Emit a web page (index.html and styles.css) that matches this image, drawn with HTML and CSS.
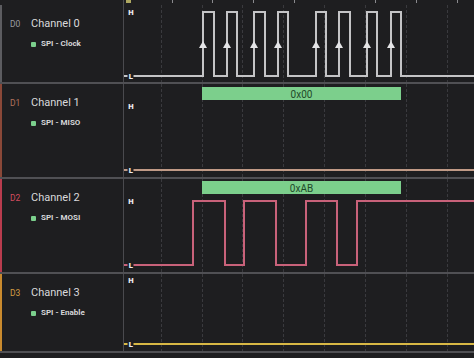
FILE: index.html
```html
<!DOCTYPE html>
<html lang="en">
<head>
    <meta charset="UTF-8">
    <meta name="viewport" content="width=device-width, initial-scale=1.0">
    <title>Logic Analyzer</title>
    <link rel="stylesheet" href="styles.css">
</head>
<body>
    <div class="ruler">
        <div class="ruler-gutter"></div>
        <svg class="ruler-ticks" width="350" height="5">
            <rect x="2" y="0" width="5" height="3" fill="#aea860"/>
            <g stroke="#8a8a8e" stroke-width="1">
                <line x1="48.5" y1="0" x2="48.5" y2="3"/>
                <line x1="88.5" y1="0" x2="88.5" y2="3"/>
                <line x1="129.5" y1="0" x2="129.5" y2="3"/>
                <line x1="170.5" y1="0" x2="170.5" y2="3"/>
                <line x1="251.5" y1="0" x2="251.5" y2="3"/>
                <line x1="292.5" y1="0" x2="292.5" y2="3"/>
                <line x1="333.5" y1="0" x2="333.5" y2="3"/>
            </g>
        </svg>
    </div>

    <!-- D0 -->
    <div class="channel ch0">
        <div class="info">
            <div class="title"><span class="dnum">D0</span><span class="name">Channel 0</span></div>
            <div class="analyzer"><span class="swatch"></span>SPI - Clock</div>
        </div>
        <svg class="wave" width="350" height="77">
            <g class="grid">
                <line x1="37.5" y1="0" x2="37.5" y2="77"/><line x1="78.5" y1="0" x2="78.5" y2="77"/>
                <line x1="118.5" y1="0" x2="118.5" y2="77"/><line x1="159.5" y1="0" x2="159.5" y2="77"/>
                <line x1="200.5" y1="0" x2="200.5" y2="77"/><line x1="241.5" y1="0" x2="241.5" y2="77"/>
                <line x1="282.5" y1="0" x2="282.5" y2="77"/><line x1="323.5" y1="0" x2="323.5" y2="77"/>
            </g>
            <path class="trace" stroke="#c4c4c6" d="M0 71 H79 V7 H90 V71 H103 V7 H113 V71 H130 V7 H141 V71 H154 V7 H164 V71 H192 V7 H202 V71 H215 V7 H226 V71 H243 V7 H253 V71 H267 V7 H277 V71 H350"/>
            <g fill="#e4e4e6">
                <path d="M79 36 L83 43 L75 43 Z"/><path d="M103 36 L107 43 L99 43 Z"/>
                <path d="M130 36 L134 43 L126 43 Z"/><path d="M154 36 L158 43 L150 43 Z"/>
                <path d="M192 36 L196 43 L188 43 Z"/><path d="M215 36 L219 43 L211 43 Z"/>
                <path d="M243 36 L247 43 L239 43 Z"/><path d="M267 36 L271 43 L263 43 Z"/>
            </g>
            <text class="lvl" x="4" y="9.5">H</text>
            <rect class="lvl-bg" x="3.5" y="67" width="6" height="8"/>
            <text class="lvl" x="4.5" y="73.5">L</text>
        </svg>
    </div>

    <!-- D1 -->
    <div class="channel ch1 decoded">
        <div class="info">
            <div class="title"><span class="dnum">D1</span><span class="name">Channel 1</span></div>
            <div class="analyzer"><span class="swatch"></span>SPI - MISO</div>
        </div>
        <svg class="wave" width="350" height="93">
            <g class="grid">
                <line x1="37.5" y1="0" x2="37.5" y2="93"/><line x1="78.5" y1="0" x2="78.5" y2="93"/>
                <line x1="118.5" y1="0" x2="118.5" y2="93"/><line x1="159.5" y1="0" x2="159.5" y2="93"/>
                <line x1="200.5" y1="0" x2="200.5" y2="93"/><line x1="241.5" y1="0" x2="241.5" y2="93"/>
                <line x1="282.5" y1="0" x2="282.5" y2="93"/><line x1="323.5" y1="0" x2="323.5" y2="93"/>
            </g>
            <rect class="frame" x="78" y="3" width="199" height="13"/>
            <text class="frame-text" x="177.5" y="13.5">0x00</text>
            <path class="trace" stroke="#c09a86" d="M0 86 H350"/>
            <text class="lvl" x="4" y="24.5">H</text>
            <rect class="lvl-bg" x="3.5" y="82" width="6" height="8"/>
            <text class="lvl" x="4.5" y="88.5">L</text>
        </svg>
    </div>

    <!-- D2 -->
    <div class="channel ch2 decoded">
        <div class="info">
            <div class="title"><span class="dnum">D2</span><span class="name">Channel 2</span></div>
            <div class="analyzer"><span class="swatch"></span>SPI - MOSI</div>
        </div>
        <svg class="wave" width="350" height="93">
            <g class="grid">
                <line x1="37.5" y1="0" x2="37.5" y2="93"/><line x1="78.5" y1="0" x2="78.5" y2="93"/>
                <line x1="118.5" y1="0" x2="118.5" y2="93"/><line x1="159.5" y1="0" x2="159.5" y2="93"/>
                <line x1="200.5" y1="0" x2="200.5" y2="93"/><line x1="241.5" y1="0" x2="241.5" y2="93"/>
                <line x1="282.5" y1="0" x2="282.5" y2="93"/><line x1="323.5" y1="0" x2="323.5" y2="93"/>
            </g>
            <rect class="frame" x="78" y="2" width="199" height="13"/>
            <text class="frame-text" x="177.5" y="12.5">0xAB</text>
            <path class="trace" stroke="#c9627a" d="M0 86 H69 V22 H101 V86 H120 V22 H152 V86 H182 V22 H213 V86 H233 V22 H350"/>
            <text class="lvl" x="4" y="24.5">H</text>
            <rect class="lvl-bg" x="3.5" y="82" width="6" height="8"/>
            <text class="lvl" x="4.5" y="88.5">L</text>
        </svg>
    </div>

    <!-- D3 -->
    <div class="channel ch3">
        <div class="info">
            <div class="title"><span class="dnum">D3</span><span class="name">Channel 3</span></div>
            <div class="analyzer"><span class="swatch"></span>SPI - Enable</div>
        </div>
        <svg class="wave" width="350" height="77">
            <g class="grid">
                <line x1="37.5" y1="0" x2="37.5" y2="77"/><line x1="78.5" y1="0" x2="78.5" y2="77"/>
                <line x1="118.5" y1="0" x2="118.5" y2="77"/><line x1="159.5" y1="0" x2="159.5" y2="77"/>
                <line x1="200.5" y1="0" x2="200.5" y2="77"/><line x1="241.5" y1="0" x2="241.5" y2="77"/>
                <line x1="282.5" y1="0" x2="282.5" y2="77"/><line x1="323.5" y1="0" x2="323.5" y2="77"/>
            </g>
            <path class="trace" stroke="#d8b845" d="M0 70 H350"/>
            <text class="lvl" x="4" y="8.5">H</text>
            <rect class="lvl-bg" x="3.5" y="66" width="6" height="8"/>
            <text class="lvl" x="4.5" y="72.5">L</text>
        </svg>
    </div>
</body>
</html>
```

FILE: styles.css
```css
body {
    margin: 0;
    width: 474px;
    height: 358px;
    overflow: hidden;
    background-color: #1e1e20;
    font-family: Roboto, "Liberation Sans", sans-serif;
    color: #d8d8da;
}
.ruler {
    display: grid;
    grid-template-columns: 124px 350px;
    height: 5px;
}
.ruler-gutter {
    border-right: 1px solid #4a4a4e;
    box-sizing: border-box;
}
.ruler-ticks,
.wave {
    display: block;
}
.channel {
    display: grid;
    grid-template-columns: 124px 350px;
    height: 77px;
    border-bottom: 2px solid #505054;
}
.channel.decoded {
    height: 93px;
}
.info {
    box-sizing: border-box;
    border-left: 2px solid #5c5c60;
    border-right: 1px solid #4a4a4e;
    padding: 12px 0 0 8px;
}
.ch1 .info { border-left-color: #8a4838; }
.ch2 .info { border-left-color: #b93c4e; }
.ch3 .info { border-left-color: #c98a2e; }
.title {
    display: flex;
    align-items: baseline;
    line-height: 14px;
}
.dnum {
    width: 21px;
    font-size: 8.5px;
    color: #9c9ca0;
}
.ch1 .dnum { color: #b4715c; }
.ch2 .dnum { color: #d44c5e; }
.ch3 .dnum { color: #d39c42; }
.name {
    font-size: 11px;
    color: #dadadc;
}
.analyzer {
    display: flex;
    align-items: center;
    gap: 5px;
    margin: 8px 0 0 21px;
    line-height: 10px;
    font-size: 8px;
    font-weight: bold;
    color: #d6d6d8;
}
.swatch {
    width: 5px;
    height: 5px;
    border-radius: 1px;
    background-color: #7bcf8c;
}
.grid line {
    stroke: #3a3a3e;
    stroke-width: 1;
    stroke-dasharray: 3 2;
}
.trace {
    fill: none;
    stroke-width: 2;
}
.lvl-bg {
    fill: #1e1e20;
}
.lvl {
    font-family: "DejaVu Sans", sans-serif;
    font-size: 7px;
    font-weight: bold;
    fill: #ececee;
}
.frame {
    fill: #7ccf8c;
}
.frame-text {
    font-family: Roboto, sans-serif;
    font-size: 10px;
    fill: #1f4a29;
    text-anchor: middle;
}
```
